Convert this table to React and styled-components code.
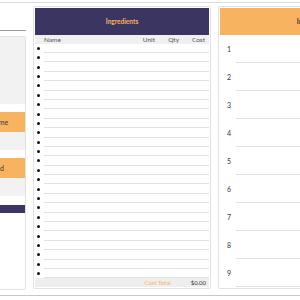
import React from "react";
import styled, { createGlobalStyle } from "styled-components";

const Global = createGlobalStyle`
  html, body { margin: 0; padding: 0; background: #fff; }
  body { font-family: "Lato", "DejaVu Sans", sans-serif; }
`;

const NAVY = "#3b3562";
const ORANGE = "#f7b35f";
const LINE = "#e2e2e2";

const Page = styled.div`
  width: 300px;
  height: 300px;
  overflow: hidden;
  position: relative;
  box-sizing: border-box;
  padding-top: 2px;
`;

const Sheet = styled.div`
  border-top: 1px solid #dcdcdc;
  border-bottom: 1px solid #c8c8c8;
  height: 294px;
  box-sizing: border-box;
  display: flex;
  gap: 7px;
  padding-top: 3px;
  margin-left: -50px;
`;

const LeftCol = styled.div`
  width: 76px;
  flex: none;
  display: flex;
  flex-direction: column;
`;

const Title = styled.div`
  height: 24px;
  border-bottom: 1px solid #9a9a9a;
  margin-bottom: 5px;
`;

const LeftCard = styled.div`
  flex: none;
  height: 254px;
  border: 1px solid ${LINE};
  border-radius: 2px;
  display: flex;
  flex-direction: column;
  box-sizing: border-box;
`;

const Photo = styled.div`
  height: 67px;
  background: #f2f2f2;
  margin-bottom: 8px;
`;

const Label = styled.div`
  height: 20px;
  background: ${ORANGE};
  color: #3a3a3a;
  font-size: 7px;
  display: flex;
  align-items: center;
  justify-content: center;
`;

const Field = styled.div`
  height: ${(p) => p.$h}px;
  background: #f2f2f2;
  margin-bottom: ${(p) => p.$mb}px;
`;

const NavyBar = styled.div`
  height: 8px;
  background: ${NAVY};
`;

const Card = styled.div`
  flex: none;
  width: ${(p) => p.$w}px;
  height: 283px;
  border: 1px solid ${LINE};
  border-radius: 2px;
  box-sizing: border-box;
  padding: 1px;
  display: flex;
  flex-direction: column;
`;

const Header = styled.div`
  height: 27px;
  flex: none;
  background: ${(p) => p.$bg};
  color: ${(p) => p.$fg};
  font-weight: 700;
  font-size: 6.5px;
  display: flex;
  align-items: center;
  justify-content: center;
`;

const ColHead = styled.div`
  height: 9px;
  background: #f0f0f0;
  display: grid;
  grid-template-columns: 1fr 24px 24px 26px;
  align-items: center;
  font-size: 6.5px;
  color: #555;
  padding: 0 4px 0 9px;
`;

const Right = styled.span`
  text-align: right;
`;

const Rows = styled.div`
  display: flex;
  flex-direction: column;
`;

const Row = styled.div`
  height: 9.4px;
  display: flex;
  align-items: center;
  box-sizing: border-box;
`;

const Bullet = styled.span`
  width: 3px;
  height: 3px;
  border-radius: 50%;
  background: #111;
  margin: 0 4px 0 2px;
  flex: none;
`;

const RowLine = styled.div`
  flex: 1;
  align-self: stretch;
  border-bottom: 1px solid ${LINE};
`;

const Footer = styled.div`
  margin-top: auto;
  height: 9px;
  background: #eeeeee;
  display: flex;
  align-items: center;
  justify-content: flex-end;
  font-size: 6px;
  padding-right: 3px;
  gap: 20px;
`;

const CostLabel = styled.span`
  color: ${ORANGE};
`;

const CostValue = styled.span`
  color: #333;
`;

const Step = styled.div`
  height: 28.3px;
  display: flex;
  box-sizing: border-box;
`;

const StepNum = styled.span`
  width: 16px;
  padding-left: 7px;
  box-sizing: border-box;
  font-size: 7px;
  color: #333;
  padding-top: 10px;
  flex: none;
`;

const StepLine = styled.div`
  flex: 1;
  border-bottom: 1px solid ${LINE};
`;

export default function App() {
  return (
    <Page>
      <Global />
      <Sheet>
        <LeftCol>
          <Title />
          <LeftCard>
            <Photo />
            <Label>Recipe Name</Label>
            <Field $h={18} $mb={8} />
            <Label>Total Yield</Label>
            <Field $h={18} $mb={9} />
            <NavyBar />
          </LeftCard>
        </LeftCol>
        <Card $w={178}>
          <Header $bg={NAVY} $fg={ORANGE}>Ingredients</Header>
          <ColHead>
            <span>Name</span>
            <Right>Unit</Right>
            <Right>Qty</Right>
            <Right>Cost</Right>
          </ColHead>
          <Rows>
            {Array.from({ length: 25 }).map((_, i) => (
              <Row key={i}>
                <Bullet />
                <RowLine />
              </Row>
            ))}
          </Rows>
          <Footer>
            <CostLabel>Cost Total</CostLabel>
            <CostValue>$0.00</CostValue>
          </Footer>
        </Card>
        <Card $w={192}>
          <Header $bg={ORANGE} $fg="#3a3a3a">Instructions</Header>
          {Array.from({ length: 9 }).map((_, i) => (
            <Step key={i}>
              <StepNum>{i + 1}</StepNum>
              <StepLine />
            </Step>
          ))}
        </Card>
      </Sheet>
    </Page>
  );
}
